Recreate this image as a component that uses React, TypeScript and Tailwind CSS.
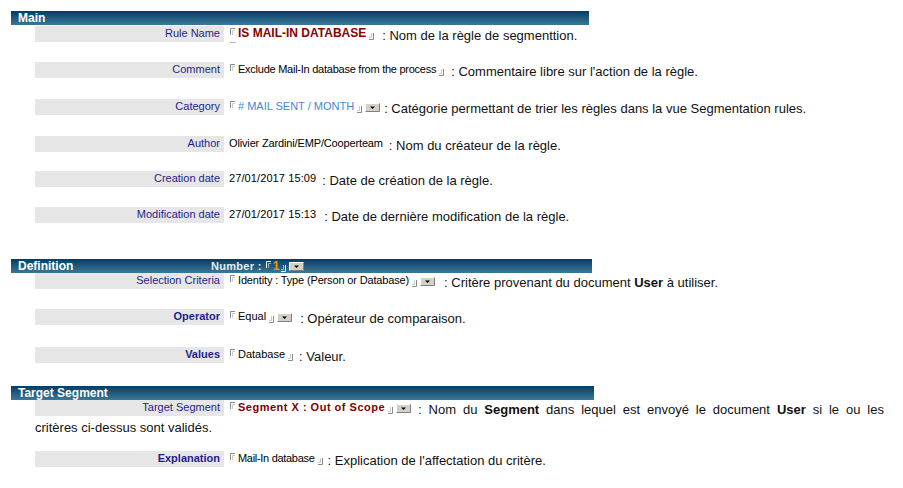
import type { ReactNode } from "react";

function OpenMark({ light, underline }: { light?: boolean; underline?: boolean }) {
  const outer = light ? "#ffffff" : "#8a8a8a";
  const inner = light ? "#9fb6c6" : "#c8c8c8";
  return (
    <svg width="7" height={underline ? 16 : 8} viewBox={`0 0 7 ${underline ? 16 : 8}`} className="block shrink-0">
      <path d="M1.5 8V1.5H6" stroke={outer} fill="none" />
      <path d="M3.5 8V3.5H6" stroke={inner} fill="none" />
      {underline && <path d="M1 15.5H7" stroke="#b4b4b4" />}
    </svg>
  );
}

function CloseMark({ light }: { light?: boolean }) {
  const outer = light ? "#ffffff" : "#8a8a8a";
  const inner = light ? "#9fb6c6" : "#c8c8c8";
  return (
    <svg width="7" height="8" viewBox="0 0 7 8" className="block shrink-0">
      <path d="M1 6.5H5.5V0" stroke={outer} fill="none" />
      <path d="M1 4.5H3.5V0" stroke={inner} fill="none" />
    </svg>
  );
}

function DropButton() {
  return (
    <svg width="15" height="9" viewBox="0 0 15 9" className="block shrink-0">
      <rect x="0" y="0" width="15" height="9" fill="#d4d0c8" />
      <path d="M0.5 8.5V0.5H14.5" stroke="#ffffff" fill="none" />
      <path d="M0.5 8.5H14.5V0.5" stroke="#808080" fill="none" />
      <path d="M5 3.5H10L7.5 6Z" fill="#000000" />
    </svg>
  );
}

function SectionBar({ width, children }: { width: string; children: ReactNode }) {
  return (
    <div
      className={`${width} flex h-[14px] items-center bg-gradient-to-b from-[#003e66] to-[#3b7896] pl-[7px] text-[12px] leading-[14px] font-bold text-white`}
    >
      {children}
    </div>
  );
}

interface RowProps {
  label: string;
  boldLabel?: boolean;
  value: ReactNode;
  marks?: boolean;
  underline?: boolean;
  drop?: boolean;
  desc: ReactNode;
  spacing: string;
  descGap: string;
}

function Row({ label, boldLabel, value, marks, underline, drop, desc, spacing, descGap }: RowProps) {
  return (
    <div className={`ml-[24px] flex h-[16px] items-start ${spacing}`}>
      <div
        className={`h-[16px] w-[189px] shrink-0 bg-[#e6e6e6] pr-[4px] text-right text-[11px] leading-[15px] text-[#1e1e8a] ${boldLabel ? "font-bold" : ""}`}
      >
        {label}
      </div>
      <div className="ml-[5px] flex shrink-0 items-start">
        {marks && (
          <span className="mt-[1px]">
            <OpenMark underline={underline} />
          </span>
        )}
        <span className={`${marks ? "ml-[2px]" : ""} whitespace-nowrap text-[11px] leading-[14px] text-black`}>
          {value}
        </span>
        {marks && (
          <span className="mt-[7px] ml-[2px]">
            <CloseMark />
          </span>
        )}
        {drop && (
          <span className="mt-[4px] ml-[2px]">
            <DropButton />
          </span>
        )}
      </div>
      <div className={`${descGap} mt-[2px] min-w-0 flex-1 whitespace-nowrap text-[13px] leading-[16px] text-[#111]`}>
        {desc}
      </div>
    </div>
  );
}

export default function App() {
  return (
    <div className="min-h-screen w-full bg-white pt-[11px] pl-[11px] font-['Liberation_Sans',Arial,sans-serif]">
      <SectionBar width="w-[578px]">Main</SectionBar>
      <Row
        spacing="mt-[1px]"
        label="Rule Name"
        marks
        underline
        value={<span className="text-[12px] font-bold text-[#8b0000]">IS MAIL-IN DATABASE</span>}
        descGap="ml-[7px]"
        desc=": Nom de la règle de segmenttion."
      />
      <Row
        spacing="mt-[20px]"
        label="Comment"
        marks
        value={<span className="tracking-[-0.25px]">Exclude Mail-In database from the process</span>}
        descGap="ml-[6px]"
        desc=": Commentaire libre sur l'action de la règle."
      />
      <Row
        spacing="mt-[21px]"
        label="Category"
        marks
        drop
        value={<span className="text-[11px] text-[#3f8ad6]"># MAIL SENT / MONTH</span>}
        descGap="ml-[4px]"
        desc=": Catégorie permettant de trier les règles dans la vue Segmentation rules."
      />
      <Row
        spacing="mt-[21px]"
        label="Author"
        value={<span className="tracking-[-0.15px]">Olivier Zardini/EMP/Cooperteam</span>}
        descGap="ml-[6px]"
        desc=": Nom du créateur de la règle."
      />
      <Row
        spacing="mt-[19px]"
        label="Creation date"
        value={<span className="tracking-[0.1px]">27/01/2017 15:09</span>}
        descGap="ml-[6px]"
        desc=": Date de création de la règle."
      />
      <Row
        spacing="mt-[20px]"
        label="Modification date"
        value={<span className="tracking-[0.1px]">27/01/2017 15:13</span>}
        descGap="ml-[8px]"
        desc=": Date de dernière modification de la règle."
      />

      <div className="mt-[36px]">
        <SectionBar width="w-[581px]">
          <span className="w-[193px] shrink-0">Definition</span>
          <span className="text-[11px] tracking-[0.3px] text-[#e4edf4]">Number :</span>
          <span className="ml-[3px] self-start mt-[1px]">
            <OpenMark light />
          </span>
          <span className="ml-[1px] text-[12px] text-[#ff9000]">1</span>
          <span className="ml-[1px] self-start mt-[6px]">
            <CloseMark light />
          </span>
          <span className="ml-[2px]">
            <DropButton />
          </span>
        </SectionBar>
      </div>
      <Row
        spacing="mt-0"
        label="Selection Criteria"
        marks
        drop
        value={<span className="tracking-[-0.15px]">Identity : Type (Person or Database)</span>}
        descGap="ml-[9px]"
        desc={
          <>
            : Critère provenant du document <span className="font-bold">User</span> à utiliser.
          </>
        }
      />
      <Row
        spacing="mt-[20px]"
        label="Operator"
        boldLabel
        marks
        drop
        value="Equal"
        descGap="ml-[8px]"
        desc=": Opérateur de comparaison."
      />
      <Row
        spacing="mt-[22px]"
        label="Values"
        boldLabel
        marks
        value="Database"
        descGap="ml-[5px]"
        desc=": Valeur."
      />

      <div className="mt-[23px]">
        <SectionBar width="w-[583px]">Target Segment</SectionBar>
      </div>
      <Row
        spacing="mt-0"
        label="Target Segment"
        marks
        drop
        value={<span className="font-bold tracking-[0.5px] text-[#800000]">Segment X : Out of Scope</span>}
        descGap="ml-[7px] mr-[19px] text-justify [text-align-last:justify]"
        desc={
          <>
            : Nom du <span className="font-bold">Segment</span> dans lequel est envoyé le document{" "}
            <span className="font-bold">User</span> si le ou les
          </>
        }
      />
      <div className="ml-[24px] mt-[4px] text-[13px] leading-[16px] text-[#111]">critères ci-dessus sont validés.</div>
      <Row
        spacing="mt-[15px]"
        label="Explanation"
        boldLabel
        marks
        value={<span className="tracking-[-0.3px]">Mail-In database</span>}
        descGap="ml-[4px]"
        desc=": Explication de l'affectation du critère."
      />
    </div>
  );
}
